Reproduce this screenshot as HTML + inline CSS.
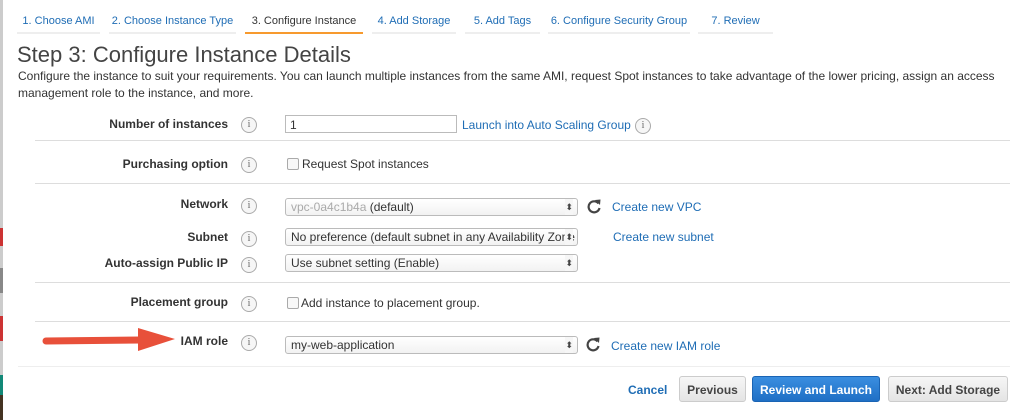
<!DOCTYPE html>
<html><head><style>
body{margin:0;width:1024px;height:420px;background:#fff;font-family:"Liberation Sans",Arial,sans-serif;position:relative;overflow:hidden;color:#333}
.a{position:absolute}
.tab{position:absolute;top:13px;height:19px;font-size:11px;color:#1f6db5;text-align:center;line-height:17px;border-bottom:2px solid #eee}
.tab.on{color:#333;border-bottom:2px solid #f79a2e}
.lbl{position:absolute;right:796px;font-size:12px;font-weight:bold;color:#333}
.i{position:absolute;left:241px;width:14px;height:14px;border:1px solid #aaa;border-radius:50%;font-size:10px;color:#666;text-align:center;line-height:14px;font-family:"Liberation Serif",serif;background:#f6f6f6}
.hr{position:absolute;left:35px;width:975px;border-top:1px solid #ddd}
.sel{position:absolute;left:285px;border:1px solid #bbb;border-radius:3px;font-size:12px;line-height:16px;padding-left:5px;padding-right:14px;box-sizing:border-box;width:293px;height:18px;background:linear-gradient(#fff,#f2f2f2);white-space:nowrap;overflow:hidden}
.sel:after{content:"⬍";position:absolute;right:4px;top:0;font-size:9px;color:#444;background:#f6f6f6}
.lnk{position:absolute;font-size:12px;color:#1f6db5}
.cb{position:absolute;width:10px;height:10px;border:1px solid #aaa;border-radius:2px;background:#f8f8f8}
.t{position:absolute;font-size:12px;color:#333}
.btn{position:absolute;top:376px;height:26px;border:1px solid #ccc;border-radius:3px;background:linear-gradient(#f6f6f6,#e4e4e4);font-size:12px;font-weight:bold;line-height:26px;text-align:center;color:#444;box-sizing:border-box}
</style></head><body>
<div class="a" style="left:0;top:0;width:3px;height:420px;background:#ccc"></div>
<div class="a" style="left:0;top:228px;width:3px;height:18px;background:#c33"></div>
<div class="a" style="left:0;top:268px;width:3px;height:25px;background:#888"></div>
<div class="a" style="left:0;top:316px;width:3px;height:25px;background:#c33"></div>
<div class="a" style="left:0;top:375px;width:3px;height:20px;background:#187"></div>
<div class="a" style="left:0;top:395px;width:3px;height:25px;background:#432"></div>

<div class="tab" style="left:17px;width:83px">1. Choose AMI</div>
<div class="tab" style="left:109px;width:127px">2. Choose Instance Type</div>
<div class="tab on" style="left:245px;width:118px">3. Configure Instance</div>
<div class="tab" style="left:372px;width:84px">4. Add Storage</div>
<div class="tab" style="left:465px;width:75px">5. Add Tags</div>
<div class="tab" style="left:548px;width:142px">6. Configure Security Group</div>
<div class="tab" style="left:698px;width:75px">7. Review</div>

<div class="a" style="left:17px;top:42px;font-size:22px;color:#444">Step 3: Configure Instance Details</div>
<div class="a" style="left:18px;top:68px;font-size:12px;line-height:17px;width:1000px">Configure the instance to suit your requirements. You can launch multiple instances from the same AMI, request Spot instances to take advantage of the lower pricing, assign an access management role to the instance, and more.</div>

<div class="lbl" style="top:117px">Number of instances</div><div class="i" style="top:117px">i</div>
<div class="a" style="left:285px;top:115px;width:172px;height:18px;border:1px solid #bbb;box-sizing:border-box;font-size:12px;padding:2px 4px">1</div>
<div class="lnk" style="left:462px;top:118px">Launch into Auto Scaling Group</div>
<div class="i" style="left:635px;top:118px">i</div>
<div class="hr" style="top:140px"></div>

<div class="lbl" style="top:157px">Purchasing option</div><div class="i" style="top:157px">i</div>
<div class="cb" style="left:287px;top:158px"></div><div class="t" style="left:302px;top:157px">Request Spot instances</div>
<div class="hr" style="top:183px"></div>

<div class="lbl" style="top:197px">Network</div><div class="i" style="top:198px">i</div>
<div class="sel" style="top:198px"><span style="color:#aaa">vpc-0a4c1b4a</span> (default)</div>
<svg class="a" style="left:586px;top:198px" width="16" height="16"><path d="M12.5 5.5 A5.5 5.5 0 1 0 13.5 10" fill="none" stroke="#444" stroke-width="2.2"/><path d="M9 2 L14.5 1.5 L14 7 Z" fill="#444"/></svg>
<div class="lnk" style="left:612px;top:200px">Create new VPC</div>

<div class="lbl" style="top:230px">Subnet</div><div class="i" style="top:231px">i</div>
<div class="sel" style="top:228px">No preference (default subnet in any Availability Zone</div>
<div class="lnk" style="left:613px;top:230px">Create new subnet</div>

<div class="lbl" style="top:256px">Auto-assign Public IP</div><div class="i" style="top:257px">i</div>
<div class="sel" style="top:254px">Use subnet setting (Enable)</div>
<div class="hr" style="top:282px"></div>

<div class="lbl" style="top:295px">Placement group</div><div class="i" style="top:296px">i</div>
<div class="cb" style="left:287px;top:297px"></div><div class="t" style="left:301px;top:296px">Add instance to placement group.</div>
<div class="hr" style="top:321px"></div>

<svg class="a" style="left:42px;top:323px" width="135" height="30"><path d="M4 18 L100 17" stroke="#e8503a" stroke-width="7" stroke-linecap="round"/><path d="M96 5 L133 16 L96 28 Z" fill="#e8503a"/></svg>
<div class="lbl" style="top:334px">IAM role</div><div class="i" style="top:335px">i</div>
<div class="sel" style="top:336px">my-web-application</div>
<svg class="a" style="left:585px;top:336px" width="16" height="16"><path d="M12.5 5.5 A5.5 5.5 0 1 0 13.5 10" fill="none" stroke="#444" stroke-width="2.2"/><path d="M9 2 L14.5 1.5 L14 7 Z" fill="#444"/></svg>
<div class="lnk" style="left:611px;top:339px">Create new IAM role</div>
<div class="hr" style="left:18px;width:992px;top:366px;border-color:#eee"></div>

<div class="lnk" style="left:628px;top:383px;font-weight:bold">Cancel</div>
<div class="btn" style="left:679px;width:67px">Previous</div>
<div class="btn" style="left:752px;width:128px;background:linear-gradient(#3a8ee0,#1f6fc5);border-color:#1a64b4;color:#fff">Review and Launch</div>
<div class="btn" style="left:888px;width:120px">Next: Add Storage</div>
</body></html>
